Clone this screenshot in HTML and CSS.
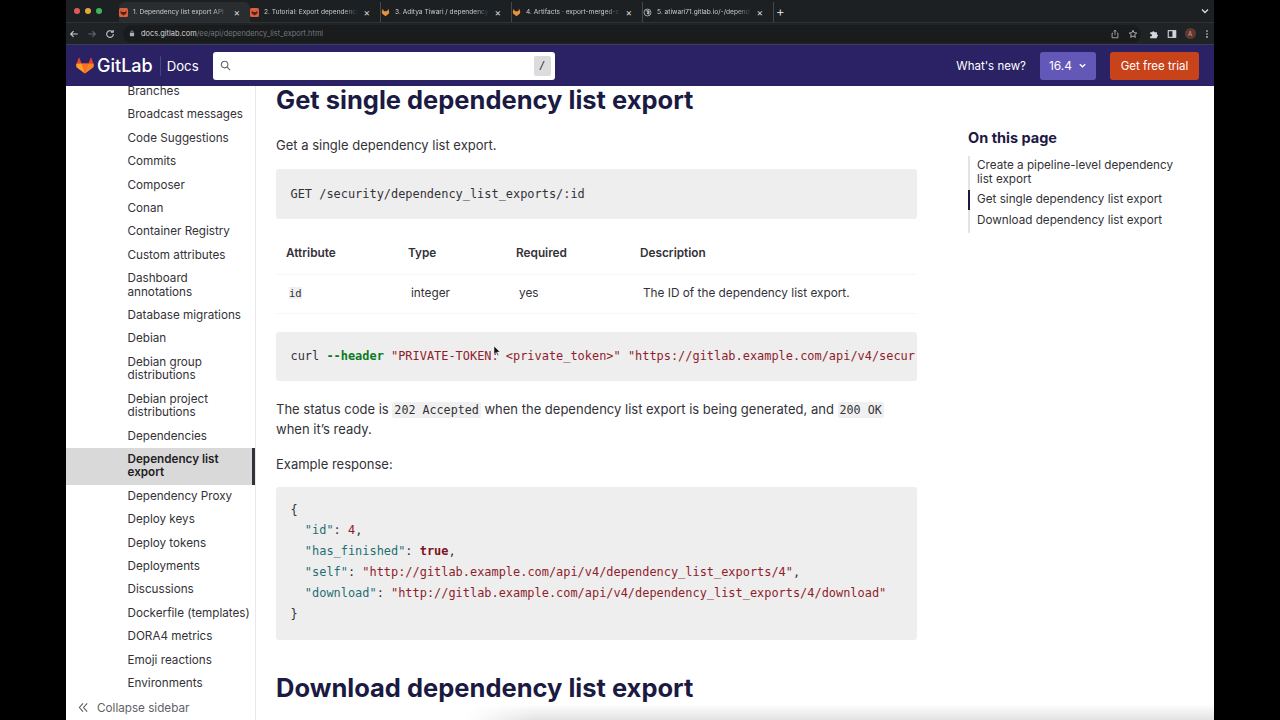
FILE: index.html
```html
<!DOCTYPE html>
<html lang="en">
  <head>
    <meta charset="UTF-8" />
    <title>Dependency list export API | GitLab</title>
    <link rel="stylesheet" href="styles.css">
  </head>
  <body>
    <div class="frame">
      <div class="tabstrip">
        <div class="lights"><span class="red"></span><span class="yellow"></span><span class="green"></span></div>
        <div class="tab active">
          <svg class="favicon" viewBox="0 0 12 12"><rect width="12" height="12" rx="2" fill="#d9603f"/><path d="M2.5 3l1.2 2.4h4.6L9.5 3l.6 4L6 10 1.9 7z" fill="#5c1f12"/></svg>
          <span class="tabtitle">1. Dependency list export API</span><span class="close">×</span>
        </div>
        <div class="tab">
          <svg class="favicon" viewBox="0 0 12 12"><rect width="12" height="12" rx="2" fill="#d9603f"/><path d="M2.5 3l1.2 2.4h4.6L9.5 3l.6 4L6 10 1.9 7z" fill="#5c1f12"/></svg>
          <span class="tabtitle">2. Tutorial: Export dependency</span><span class="close">×</span>
        </div>
        <div class="tab">
          <svg class="favicon" viewBox="0 0 12 12"><path d="M1 5l1.4-4 1.5 3.4h4.2L9.6 1 11 5l-.4 2.4L6 11 1.4 7.4z" fill="#e8923a"/></svg>
          <span class="tabtitle">3. Aditya Tiwari / dependency</span><span class="close">×</span>
        </div>
        <div class="tab">
          <svg class="favicon" viewBox="0 0 12 12"><path d="M1 5l1.4-4 1.5 3.4h4.2L9.6 1 11 5l-.4 2.4L6 11 1.4 7.4z" fill="#e8923a"/></svg>
          <span class="tabtitle">4. Artifacts · export-merged-s</span><span class="close">×</span>
        </div>
        <div class="tab">
          <svg class="favicon" viewBox="0 0 12 12"><circle cx="6" cy="6" r="4.6" fill="none" stroke="#aeb1b4" stroke-width="1.2"/><path d="M3 3.5l3 1.5-1 2.5 3 1.5 1-4-2-2.5z" fill="#aeb1b4"/></svg>
          <span class="tabtitle">5. atiwari71.gitlab.io/-/depend</span><span class="close">×</span>
        </div>
        <span class="newtab">+</span>
        <svg class="tabmenu" viewBox="0 0 10 10"><path d="M2 3.5L5 6.5 8 3.5" fill="none" stroke="#d5d7d9" stroke-width="1.4"/></svg>
      </div>

      <div class="toolbar">
        <svg class="tool" viewBox="0 0 12 12"><path d="M10.5 6H2M5.5 2.5L2 6l3.5 3.5" fill="none" stroke="#c9cccf" stroke-width="1.3"/></svg>
        <svg class="tool" viewBox="0 0 12 12"><path d="M1.5 6H10M6.5 2.5L10 6l-3.5 3.5" fill="none" stroke="#63676a" stroke-width="1.3"/></svg>
        <svg class="tool" viewBox="0 0 12 12"><path d="M10 6a4 4 0 1 1-1.2-2.8M9.8 1.2v2.6H7.2" fill="none" stroke="#c9cccf" stroke-width="1.3"/></svg>
        <div class="omnibox">
          <svg class="lock" viewBox="0 0 8 10"><rect x="1" y="4" width="6" height="5" rx="1" fill="#aeb1b4"/><path d="M2.3 4V3a1.7 1.7 0 0 1 3.4 0v1" fill="none" stroke="#aeb1b4"/></svg>
          <span class="host">docs.gitlab.com</span><span class="path">/ee/api/dependency_list_export.html</span>
          <div class="omniend">
            <svg class="tool" viewBox="0 0 12 12"><path d="M3.5 5H2.5v5.5h7V5h-1M6 7V1.5M4.3 3L6 1.5 7.7 3" fill="none" stroke="#b5b8bb"/></svg>
            <svg class="tool" viewBox="0 0 12 12"><path d="M6 1.5l1.3 3 3.2.3-2.4 2.1.7 3.1L6 8.4l-2.8 1.6.7-3.1-2.4-2.1 3.2-.3z" fill="none" stroke="#c4c7ca"/></svg>
          </div>
        </div>
        <svg class="tool" viewBox="0 0 12 12"><path d="M1.5 4h2.4a1.3 1.3 0 1 1 2.6 0h3v2.6a1.3 1.3 0 1 1 0 2.6V11H1.5V8.6a1.4 1.4 0 1 0 0-2.4z" fill="#d5d7d9"/></svg>
        <svg class="tool" viewBox="0 0 12 12"><rect x="1.5" y="2" width="9" height="8" fill="none" stroke="#d5d7d9" stroke-width="1.3"/><rect x="6.5" y="2" width="4" height="8" fill="#d5d7d9"/></svg>
        <span class="avatar">A</span>
        <svg class="tool" viewBox="0 0 12 12"><circle cx="6" cy="2.5" r="1" fill="#d5d7d9"/><circle cx="6" cy="6" r="1" fill="#d5d7d9"/><circle cx="6" cy="9.5" r="1" fill="#d5d7d9"/></svg>
      </div>

      <header class="navbar">
        <a class="logo">
          <svg class="tanuki" viewBox="0 0 24 22"><path d="M12 21.5L.8 13.2.3 11.4c-.4-1 0-2 .3-2.6L3.6.9c.2-.5.9-.5 1.1 0l2.6 7.4h9.4L19.3.9c.2-.5.9-.5 1.1 0l3 7.9c.3.6.7 1.600.3 2.600l-.5 1.800z" fill="#e2432a"/><path d="M12 21.500l-4.700-13.200h9.400z" fill="#fc6d26"/><path d="M12 21.500L.8 13.200c-.4-1.200-.5-2.800-.2-4.400l6.700-.5z" fill="#fca326"/><path d="M12 21.500l11.200-8.300c.4-1.200.5-2.800.2-4.400l-6.700-.5z" fill="#fca326" fill-opacity=".7"/></svg>
          <span class="wordmark">GitLab</span>
        </a>
        <span class="docs">Docs</span>
        <div class="search">
          <svg class="searchicon" viewBox="0 0 12 12"><circle cx="5" cy="5" r="3.600" fill="none" stroke="#666" stroke-width="1.200"/><path d="M7.800 7.800L11 11" stroke="#666" stroke-width="1.200"/></svg>
          <kbd class="slash">/</kbd>
        </div>
        <a class="whatsnew">What's new?</a>
        <a class="version">16.4 <svg class="chev" viewBox="0 0 10 10"><path d="M2 3.500L5 6.500 8 3.500" fill="none" stroke="#fff" stroke-width="1.500"/></svg></a>
        <a class="trial">Get free trial</a>
      </header>

      <div class="page">
        <nav class="sidebar">
          <ul class="sidelist">
            <li>Branches</li>
            <li>Broadcast messages</li>
            <li>Code Suggestions</li>
            <li>Commits</li>
            <li>Composer</li>
            <li>Conan</li>
            <li>Container Registry</li>
            <li>Custom attributes</li>
            <li>Dashboard<br>annotations</li>
            <li>Database migrations</li>
            <li>Debian</li>
            <li>Debian group<br>distributions</li>
            <li>Debian project<br>distributions</li>
            <li>Dependencies</li>
            <li class="current">Dependency list<br>export</li>
            <li>Dependency Proxy</li>
            <li>Deploy keys</li>
            <li>Deploy tokens</li>
            <li>Deployments</li>
            <li>Discussions</li>
            <li>Dockerfile (templates)</li>
            <li>DORA4 metrics</li>
            <li>Emoji reactions</li>
            <li>Environments</li>
          </ul>
          <div class="collapse">
            <svg class="collapseicon" viewBox="0 0 12 12"><path d="M5.500 1.500L1.500 6l4 4.500M10 1.500L6 6l4 4.500" fill="none" stroke="#555" stroke-width="1.100"/></svg>
            Collapse sidebar
          </div>
        </nav>

        <main class="content">
          <h1 class="title">Get single dependency list export</h1>
          <p class="lead">Get a single dependency list export.</p>
          <pre class="code short">GET /security/dependency_list_exports/:id</pre>
          <table class="attrs">
            <thead>
              <tr><th class="c1">Attribute</th><th class="c2">Type</th><th class="c3">Required</th><th>Description</th></tr>
            </thead>
            <tbody>
              <tr><td class="c1"><code class="idcode">id</code></td><td class="c2">integer</td><td class="c3">yes</td><td>The ID of the dependency list export.</td></tr>
            </tbody>
          </table>
          <pre class="code curl">curl <span class="opt">--header</span> <span class="str">"PRIVATE-TOKEN: &lt;private_token&gt;"</span> <span class="str">"https://gitlab.example.com/api/v4/security/dependency_list_exports/4"</span></pre>
          <p class="status">The status code is <code class="inline">202 Accepted</code> when the dependency list export is being generated, and <code class="inline">200 OK</code> when it’s ready.</p>
          <p class="example">Example response:</p>
<pre class="code json">{
  <span class="key">"id"</span>: <span class="str">4</span>,
  <span class="key">"has_finished"</span>: <span class="lit">true</span>,
  <span class="key">"self"</span>: <span class="str">"http://gitlab.example.com/api/v4/dependency_list_exports/4"</span>,
  <span class="key">"download"</span>: <span class="str">"http://gitlab.example.com/api/v4/dependency_list_exports/4/download"</span>
}</pre>
          <h1 class="title second">Download dependency list export</h1>
        </main>

        <aside class="toc">
          <h2 class="tochead">On this page</h2>
          <ul class="toclist">
            <li>Create a pipeline-level dependency list export</li>
            <li class="tocactive">Get single dependency list export</li>
            <li>Download dependency list export</li>
          </ul>
        </aside>
      </div>
      <div class="bottomfade"></div>
      <svg class="cursor" viewBox="0 0 8 12"><path d="M1 1v8.500l2.200-2 1.500 3 1-.5-1.400-2.900H7z" fill="#111" stroke="#fff" stroke-width=".5"/></svg>
    </div>
  </body>
</html>
```

FILE: styles.css
```css
html {
  height: 100%;
  background: #000;
}
body {
  margin: 0;
  height: 720px;
  overflow: hidden;
  background: #000;
  font-family: Inter, "Liberation Sans", sans-serif;
}
ul {
  list-style: none;
  margin: 0;
  padding: 0;
}
.frame {
  position: relative;
  width: 1148px;
  height: 720px;
  margin: 0 auto;
  overflow: hidden;
  background: #fff;
  display: flex;
  flex-direction: column;
}

/* browser chrome */
.tabstrip {
  height: 22px;
  background: #1d2022;
  display: flex;
  align-items: center;
  color: #c9cccf;
  font-size: 6.600px;
  flex-shrink: 0;
}
.lights {
  display: flex;
  gap: 5px;
  width: 53px;
  padding-left: 8px;
  box-sizing: border-box;
}
.lights span {
  width: 6px;
  height: 6px;
  border-radius: 50%;
}
.red {
  background: #e0595a;
}
.yellow {
  background: #e0a93a;
}
.green {
  background: #3fb55a;
}
.tab {
  width: 131px;
  height: 20px;
  margin-top: 2px;
  box-sizing: border-box;
  padding: 0 10px 0 0;
  display: flex;
  align-items: center;
  border-right: 1px solid #45484b;
}
.tab.active {
  background: #2a2d30;
  border-radius: 6px 6px 0 0;
  border-right: 0;
}
.favicon {
  width: 9px;
  height: 9px;
  margin-right: 5px;
  flex-shrink: 0;
}
.tabtitle {
  flex: 1;
  overflow: hidden;
  white-space: nowrap;
  -webkit-mask-image: linear-gradient(to right, #000 85%, transparent);
}
.close {
  width: 12px;
  text-align: right;
  font-size: 10px;
  color: #d5d7d9;
}
.newtab {
  margin-left: 2px;
  font-size: 13px;
  color: #d5d7d9;
}
.tabmenu {
  width: 10px;
  height: 10px;
  margin-left: auto;
  margin-right: 4px;
}
.toolbar {
  height: 22px;
  background: #202326;
  border-top: 1px solid #2f3235;
  box-sizing: border-box;
  display: flex;
  align-items: center;
  gap: 8px;
  padding: 0 2px 0 3px;
  flex-shrink: 0;
}
.tool {
  width: 10px;
  height: 10px;
  flex-shrink: 0;
}
.omnibox {
  flex: 1;
  height: 18px;
  background: #191b1d;
  border-radius: 9px;
  display: flex;
  align-items: center;
  font-size: 7.400px;
  padding-left: 6px;
}
.lock {
  width: 6px;
  height: 7px;
  margin-right: 6px;
}
.host {
  color: #d5d7d9;
}
.path {
  color: #74787b;
}
.omniend {
  margin-left: auto;
  display: flex;
  gap: 8px;
  padding-right: 3px;
}
.avatar {
  width: 11px;
  height: 11px;
  margin-right: -1.500px;
  border-radius: 50%;
  background: #5c3a30;
  color: #e89a84;
  font-size: 6px;
  line-height: 11px;
  text-align: center;
}

/* docs navbar */
.navbar {
  height: 42px;
  background: #2b2265;
  border-top: 1px solid #3a3d5a;
  box-sizing: border-box;
  display: flex;
  align-items: center;
  color: #fff;
  padding: 0 15px 0 10px;
  flex-shrink: 0;
}
.logo {
  display: flex;
  align-items: center;
  gap: 3px;
}
.tanuki {
  width: 18px;
  height: 17px;
}
.wordmark {
  font-size: 18px;
  font-weight: 500;
}
.docs {
  margin-left: 7px;
  padding-left: 6px;
  border-left: 1px solid #4a4380;
  font-size: 13.200px;
  line-height: 20px;
}
.search {
  width: 342px;
  height: 28px;
  margin-left: 14px;
  background: #fff;
  border-radius: 3px;
  display: flex;
  align-items: center;
  justify-content: space-between;
  padding: 0 4px 0 7px;
  box-sizing: border-box;
}
.searchicon {
  width: 11px;
  height: 11px;
}
.slash {
  width: 17px;
  height: 20px;
  background: #dcdcde;
  border-radius: 2px;
  color: #333;
  font: 11px/20px "DejaVu Sans Mono", monospace;
  text-align: center;
}
.whatsnew {
  margin-left: auto;
  font-size: 11.500px;
}
.version {
  width: 56px;
  height: 28px;
  margin-left: 14px;
  background: #6358b8;
  border-radius: 3px;
  font-size: 12px;
  display: flex;
  align-items: center;
  justify-content: center;
  gap: 6px;
}
.chev {
  width: 9px;
  height: 9px;
}
.trial {
  width: 89px;
  height: 28px;
  margin-left: 14px;
  background: #c8431a;
  border-radius: 3px;
  font-size: 11.500px;
  line-height: 28px;
  text-align: center;
}

/* page body */
.page {
  flex: 1;
  display: flex;
  min-height: 0;
}
.sidebar {
  position: relative;
  width: 190px;
  flex-shrink: 0;
  border-right: 1px solid #e8e8ea;
  box-sizing: border-box;
  overflow: hidden;
  background: #fff;
}
.sidelist {
  margin-top: -6px;
}
.sidelist li {
  padding: 5px 2px 5px 61.500px;
  font-size: 11.700px;
  line-height: 13.400px;
  color: #333238;
}
.sidelist .current {
  background: #d9d9d9;
  border-right: 3px solid #333238;
  font-weight: 600;
  color: #1f1e24;
}
.collapse {
  position: absolute;
  left: 0;
  right: 0;
  bottom: 0;
  height: 25px;
  background: #fff;
  display: flex;
  align-items: center;
  gap: 8px;
  padding-left: 12px;
  font-size: 11.700px;
  color: #626168;
}
.collapseicon {
  width: 11px;
  height: 11px;
}
.content {
  width: 641px;
  margin-left: 20px;
  flex-shrink: 0;
  overflow: hidden;
}
.title {
  margin: -1px 0 0;
  font-size: 25.500px;
  line-height: 30px;
  font-weight: 700;
  color: #1b1a42;
}
.lead {
  margin: 21px 0 0;
  font-size: 13px;
  line-height: 18px;
  color: #333238;
}
.code {
  margin: 0;
  background: #eeeeee;
  border-right: 2px solid #eeeeee;
  border-radius: 3px;
  font: 11.930px/20.900px "DejaVu Sans Mono", monospace;
  color: #333238;
  overflow: hidden;
  padding: 0 0 0 14.500px;
  white-space: pre;
}
.short {
  margin-top: 15px;
  height: 50px;
  line-height: 50px;
}
.attrs {
  width: 100%;
  margin-top: 14px;
  border-collapse: collapse;
  table-layout: fixed;
  font-size: 11.800px;
  color: #333238;
}
.attrs th {
  height: 41px;
  box-sizing: border-box;
  text-align: left;
  padding: 0 0 0 10px;
  font-weight: 600;
  border-bottom: 1px solid #f7f7f7;
}
.attrs td {
  height: 39px;
  box-sizing: border-box;
  padding: 0 0 2px 13px;
  border-bottom: 1px solid #f7f7f7;
}
.c1 {
  width: 122px;
}
.c2 {
  width: 108px;
}
.c3 {
  width: 124px;
}
.idcode {
  font: 10.500px "DejaVu Sans Mono", monospace;
  background: #f0f0f2;
}
.curl {
  margin-top: 18px;
  height: 49px;
  line-height: 49px;
}
.opt {
  color: #0b7a1f;
  font-weight: 700;
}
.str {
  color: #8f1d2c;
}
.key {
  color: #1f6f73;
}
.lit {
  color: #7a1322;
  font-weight: 700;
}
.status {
  margin: 18px 0 0;
  font-size: 13px;
  line-height: 20px;
  color: #333238;
}
.inline {
  font: 11.700px "DejaVu Sans Mono", monospace;
  background: #f0f0f0;
  padding: 1px 2px;
  border-radius: 2px;
}
.example {
  margin: 15px 0 0;
  font-size: 13px;
  line-height: 20px;
  color: #333238;
}
.json {
  margin-top: 13px;
  height: 153px;
  padding-top: 13px;
  box-sizing: border-box;
}
.second {
  margin-top: 33px;
}
.toc {
  width: 232px;
  margin-left: 51px;
  padding-top: 43px;
  flex-shrink: 0;
}
.tochead {
  margin: 0;
  font-size: 14.500px;
  line-height: 18px;
  font-weight: 700;
  color: #1b1a42;
}
.toclist {
  margin-top: 8.500px;
  padding-bottom: 2px;
  border-left: 2px solid #e4e4e7;
  font-size: 11.700px;
  line-height: 13.500px;
  color: #333238;
}
.toclist li {
  padding: 3.500px 24px 3.500px 7px;
}
.toclist .tocactive {
  margin-left: -2px;
  border-left: 2px solid #1b1a42;
}

/* soft shadow along the bottom of the video frame */
.bottomfade {
  position: absolute;
  left: 400px;
  right: 0;
  bottom: 0;
  height: 16px;
  background: linear-gradient(to bottom, rgba(225, 225, 225, 0), #e2e2e2);
  -webkit-mask-image: linear-gradient(to right, transparent, #000 70px);
}
.cursor {
  position: absolute;
  left: 427px;
  top: 345px;
  width: 8px;
  height: 12px;
}
```
